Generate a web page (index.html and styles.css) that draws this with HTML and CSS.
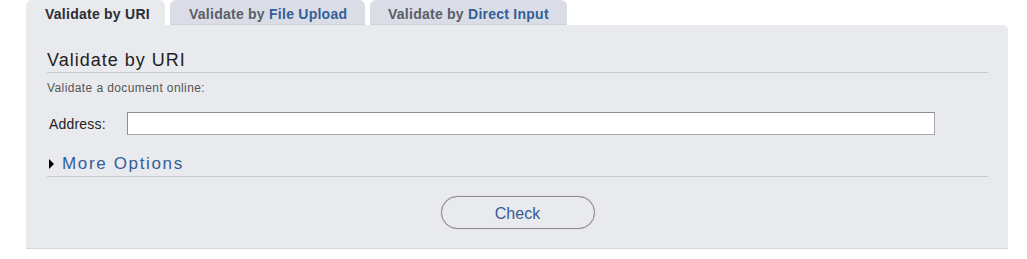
FILE: index.html
```html
<!DOCTYPE html>
<html>
<head>
<meta charset="utf-8">
<link rel="stylesheet" href="styles.css">
</head>
<body>
<div class="wrap">
  <div class="tabs">
    <div class="tab active t1">Validate by URI</div>
    <div class="tab t2">Validate by <span class="em">File Upload</span></div>
    <div class="tab t3">Validate by <span class="em">Direct Input</span></div>
  </div>
  <div class="panel">
    <h2 class="title">Validate by URI</h2>
    <p class="desc">Validate a document online:</p>
    <div class="row">
      <label class="label">Address:</label>
      <input class="input" type="text">
    </div>
    <div class="options"><span class="tri"></span><a class="opt-link">More Options</a></div>
    <div class="actions"><button class="check">Check</button></div>
  </div>
</div>
</body>
</html>
```
FILE: styles.css
```css
* { box-sizing: border-box; }
body { margin: 0; background: #fff; font-family: "Liberation Sans", Arial, sans-serif; color: #222; }
.wrap { margin-left: 26px; width: 982px; }
.tabs { display: flex; gap: 5px; height: 25px; }
.tab {
  height: 25px; line-height: 28px; padding-left: 19px; white-space: nowrap;
  font-size: 14px; font-weight: bold; color: #5a5e68; letter-spacing: 0.25px;
  background: #dadde5; border-radius: 6px 6px 0 0;
  border-bottom: 1px solid #cfd1d8;
}
.t1 { width: 139px; }
.t2 { width: 195px; }
.t3 { width: 197px; padding-left: 18px; }
.tab.active { background: #e9eaee; color: #2b2e35; border-bottom: none; }
.tab .em { color: #335e99; }
.panel {
  background: #e9eaee; border-radius: 0 5px 0 0;
  padding: 0 20px 19px 21px; border-bottom: 1px solid #d6d7db;
}
.title {
  margin: 0; padding: 25px 0 2px; font-size: 18px; line-height: 20px;
  font-weight: normal; letter-spacing: 1px; color: #1e1e1e;
  border-bottom: 1px solid #c9cacf;
}
.desc { margin: 8px 0 0; font-size: 12px; line-height: 14px; color: #555; letter-spacing: 0.4px; }
.row { display: flex; align-items: center; margin-top: 17px; height: 23px; }
.label { font-size: 14px; color: #222; width: 80px; padding-left: 2px; letter-spacing: 0.2px; }
.input {
  width: 808px; height: 23px; margin: 0; background: #fff;
  border: 1px solid #a8a8a8; border-top-color: #8f8f8f; border-left-color: #8f8f8f;
}
.options {
  margin-top: 18px; padding-bottom: 2px; line-height: 21px; display: flex; align-items: center;
  border-bottom: 1px solid #c9cacf;
}
.tri {
  width: 0; height: 0; margin-left: 2px; margin-right: 8px;
  border-top: 5px solid transparent; border-bottom: 5px solid transparent; border-left: 5px solid #000;
}
.opt-link { font-size: 17px; letter-spacing: 1.65px; color: #335e99; }
.actions { display: flex; justify-content: center; margin-top: 19px; }
.check {
  width: 154px; height: 33px; border-radius: 17px; margin: 0; padding: 2px 0 0;
  border: 1px solid #8a8a8a; background: #e9eaee;
  box-shadow: 0 0 1px #aaa;
  font-family: "Liberation Sans", Arial, sans-serif; font-size: 16px; color: #365d95;
}
```
